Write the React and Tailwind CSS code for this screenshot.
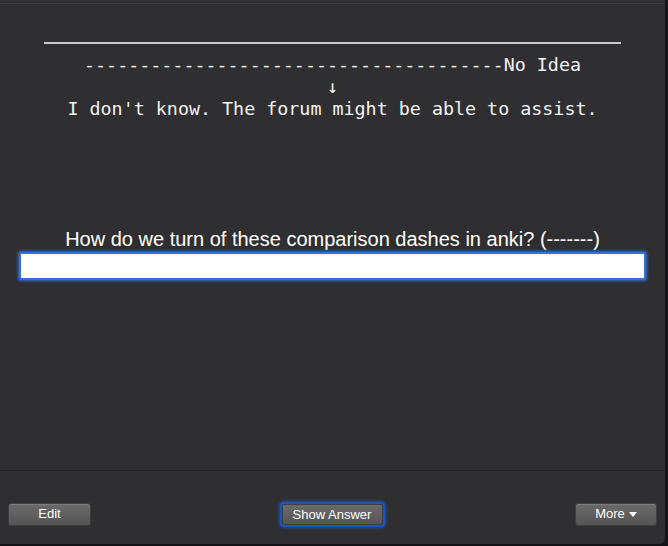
export default function App() {
  return (
    <div className="w-[668px] h-[546px] bg-[#141416] overflow-hidden">
      <div className="w-[665px] h-[544px] bg-[#2f2f31] rounded-br-[6px] flex flex-col">
        <div className="h-[3px]" />
        <div className="h-px bg-[#3c3c3e]" />

        {/* card */}
        <div className="flex-1 flex flex-col items-center pt-[38px]">
          <div className="w-[577px] h-[2px] bg-[#c9c9c9] ml-[-1px]" />
          <div
            className="mt-[10px] text-[18.35px] leading-[22px] text-[#f2f2f2] text-center"
            style={{ fontFamily: '"DejaVu Sans Mono", monospace' }}
          >
            <div>{"--------------------------------------No Idea"}</div>
            <div>↓</div>
            <div>I don't know. The forum might be able to assist.</div>
          </div>

          <div
            className="mt-[107px] text-[20px] leading-[24px] text-white"
            style={{ fontFamily: '"Liberation Sans", Arial, sans-serif' }}
          >
            How do we turn of these comparison dashes in anki? (-------)
          </div>
          <div className="mt-[1px] w-[627px] h-[28px] bg-white border-2 border-[#2f6fe0] rounded-[2px] shadow-[0_0_3px_1px_rgba(60,130,255,0.7)]" />
        </div>

        <div className="h-px bg-[#242426]" />

        {/* bottom bar */}
        <div
          className="h-[73px] flex items-center justify-between px-[8px] pt-[13px] text-[13px] text-white"
          style={{ fontFamily: '"Liberation Sans", Arial, sans-serif' }}
        >
          <button className="w-[83px] h-[23px] rounded-[3px] bg-gradient-to-b from-[#6a6a6a] to-[#555555] border border-[#3e3e3e] shadow-[inset_0_1px_0_rgba(255,255,255,0.12)]">
            Edit
          </button>
          <div className="rounded-[4px] p-[2px] bg-[#1d54b8] shadow-[0_0_3px_1px_rgba(40,100,220,0.6)] ml-[-2px]">
            <button className="w-[101px] h-[21px] rounded-[2px] bg-gradient-to-b from-[#6a6a6a] to-[#555555] border border-[#3e3e3e]">
              Show Answer
            </button>
          </div>
          <button className="w-[82px] h-[23px] rounded-[3px] bg-gradient-to-b from-[#6a6a6a] to-[#555555] border border-[#3e3e3e] flex items-center justify-center gap-[4px] shadow-[inset_0_1px_0_rgba(255,255,255,0.12)]">
            <span>More</span>
            <svg width="8" height="5" viewBox="0 0 8 5">
              <path d="M0 0 L8 0 L4 5 Z" fill="white" />
            </svg>
          </button>
        </div>
      </div>
    </div>
  );
}
